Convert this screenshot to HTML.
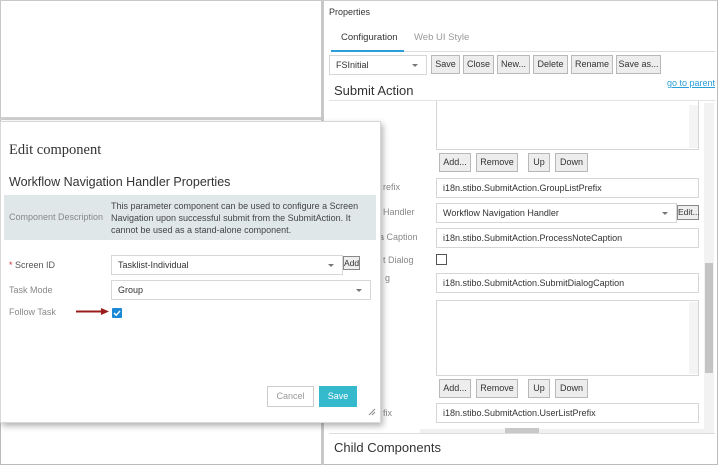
<!DOCTYPE html>
<html><head><style>
*{box-sizing:border-box;margin:0;padding:0}
body{width:718px;height:465px;overflow:hidden;background:#fff;font-family:"Liberation Sans",sans-serif;font-size:9px;color:#333;position:relative}
.a{position:absolute}
.btn{position:absolute;height:19px;border:1px solid #b8b8b8;background:#ededed;font-size:9px;text-align:center;line-height:17px;color:#333}
.inp{position:absolute;height:20px;border:1px solid #d6d6d6;background:#fff;padding-left:6px;line-height:18px;font-size:9px;color:#333}
.caret{position:absolute;right:8px;top:8px;width:0;height:0;border-left:3px solid transparent;border-right:3px solid transparent;border-top:3px solid #777}
.lbl{position:absolute;color:#888;font-size:9px}
</style></head><body>
<div class="a" style="left:0;top:0;width:718px;height:465px;border:1px solid #bbb;border-top:1px solid #ccc"></div>
<div class="a" style="left:0;top:0;width:323px;height:120px;border:1px solid #c8c8c8;border-right:2px solid #c4c4c4;border-bottom:3px solid #cfcfcf"></div>
<div class="a" style="left:321px;top:0;width:3px;height:465px;background:#c8c8c8"></div>
<div class="a" style="left:329px;top:7px;font-size:9px;color:#333">Properties</div>
<div class="a" style="left:341px;top:32px;font-size:9.5px;color:#333">Configuration</div>
<div class="a" style="left:414px;top:32px;font-size:9.5px;color:#999">Web UI Style</div>
<div class="a" style="left:331px;top:50px;width:73px;height:2px;background:#2a9fd8"></div>
<div class="a" style="left:404px;top:51px;width:311px;height:1px;background:#ddd"></div>
<div class="inp" style="left:329px;top:55px;width:98px">FSInitial<span class="caret"></span></div>
<div class="btn" style="left:431px;top:55px;width:29px">Save</div>
<div class="btn" style="left:463px;top:55px;width:31px">Close</div>
<div class="btn" style="left:497px;top:55px;width:33px">New...</div>
<div class="btn" style="left:533px;top:55px;width:35px">Delete</div>
<div class="btn" style="left:571px;top:55px;width:42px">Rename</div>
<div class="btn" style="left:616px;top:55px;width:45px">Save as...</div>
<div class="a" style="left:667px;top:78px;font-size:9px;color:#2a9fd8;text-decoration:underline">go to parent</div>
<div class="a" style="left:334px;top:83px;font-size:13px;color:#333">Submit Action</div>
<div class="a" style="left:329px;top:100px;width:386px;height:1px;background:#e2e2e2"></div>
<div class="a" style="left:704px;top:103px;width:10px;height:330px;background:#f2f2f2"></div>
<div class="a" style="left:705px;top:263px;width:8px;height:110px;background:#c4c4c4"></div>
<div class="a" style="left:420px;top:429px;width:285px;height:4px;background:#f0f0f0"></div>
<div class="a" style="left:505px;top:428px;width:34px;height:5px;background:#c8c8c8"></div>
<div class="a" style="left:329px;top:433px;width:386px;height:1px;background:#ddd"></div>
<div class="inp" style="left:436px;top:101px;width:263px;height:49px;border-top:none"></div>
<div class="a" style="left:689px;top:105px;width:9px;height:43px;background:#f4f4f4"></div>
<div class="btn" style="left:439px;top:153px;width:32px">Add...</div>
<div class="btn" style="left:476px;top:153px;width:42px">Remove</div>
<div class="btn" style="left:528px;top:153px;width:22px">Up</div>
<div class="btn" style="left:555px;top:153px;width:33px">Down</div>
<div class="lbl" style="left:383px;top:182px">refix</div>
<div class="inp" style="left:436px;top:178px;width:263px">i18n.stibo.SubmitAction.GroupListPrefix</div>
<div class="lbl" style="left:383px;top:207px">Handler</div>
<div class="inp" style="left:436px;top:203px;width:241px">Workflow Navigation Handler<span class="caret"></span></div>
<div class="a" style="left:677px;top:205px;width:22px;height:15px;border:1px solid #888;background:#eee;font-size:8.5px;line-height:13px;text-align:center">Edit...</div>
<div class="lbl" style="left:379px;top:232px">a Caption</div>
<div class="inp" style="left:436px;top:228px;width:263px">i18n.stibo.SubmitAction.ProcessNoteCaption</div>
<div class="lbl" style="left:383px;top:255px">t Dialog</div>
<div class="a" style="left:436px;top:254px;width:11px;height:11px;border:1px solid #555;background:#fff"></div>
<div class="lbl" style="left:385px;top:273px">g</div>
<div class="inp" style="left:436px;top:273px;width:263px">i18n.stibo.SubmitAction.SubmitDialogCaption</div>
<div class="inp" style="left:436px;top:300px;width:263px;height:76px"></div>
<div class="a" style="left:689px;top:302px;width:9px;height:72px;background:#f4f4f4"></div>
<div class="btn" style="left:439px;top:379px;width:32px">Add...</div>
<div class="btn" style="left:476px;top:379px;width:42px">Remove</div>
<div class="btn" style="left:528px;top:379px;width:22px">Up</div>
<div class="btn" style="left:555px;top:379px;width:33px">Down</div>
<div class="lbl" style="left:383px;top:408px">fix</div>
<div class="inp" style="left:436px;top:403px;width:263px">i18n.stibo.SubmitAction.UserListPrefix</div>
<div class="a" style="left:334px;top:440px;font-size:13px;color:#333">Child Components</div>
<div class="a" style="left:0;top:121px;width:381px;height:302px;background:#fff;border:1px solid #d8d8d8;box-shadow:2px 3px 6px rgba(0,0,0,.3)">
<div class="a" style="left:8px;top:20px;font-family:'Liberation Serif',serif;font-size:14.5px;color:#333">Edit component</div>
<div class="a" style="left:8px;top:53px;font-size:12.5px;color:#333">Workflow Navigation Handler Properties</div>
<div class="a" style="left:3px;top:73px;width:372px;height:45px;background:#dfe7e9"></div>
<div class="a" style="left:8px;top:90px;font-size:9px;color:#888">Component Description</div>
<div class="a" style="left:110px;top:78px;font-size:9px;color:#444;line-height:12px;width:260px">This parameter component can be used to configure a Screen Navigation upon successful submit from the SubmitAction. It cannot be used as a stand-alone component.</div>
<div class="a" style="left:8px;top:138px;font-size:9px;color:#555"><span style="color:#c33">*</span> Screen ID</div>
<div class="inp" style="left:110px;top:133px;width:232px">Tasklist-Individual<span class="caret"></span></div>
<div class="a" style="left:342px;top:134px;width:17px;height:14px;border:1px solid #888;background:#eee;font-size:8.5px;line-height:12px;text-align:center">Add</div>
<div class="lbl" style="left:8px;top:163px">Task Mode</div>
<div class="inp" style="left:110px;top:158px;width:260px">Group<span class="caret"></span></div>
<div class="lbl" style="left:8px;top:185px">Follow Task</div>
<svg class="a" style="left:74px;top:186px" width="36" height="7"><path d="M1 3.5 L28 3.5" stroke="#9b1c1c" stroke-width="2"/><path d="M26 0 L34 3.5 L26 7 Z" fill="#9b1c1c"/></svg>
<div class="a" style="left:111px;top:186px;width:10px;height:10px;background:#1a8ad6;border-radius:1px"></div>
<svg class="a" style="left:111px;top:186px" width="10" height="10"><path d="M2 5 L4.2 7.2 L8 3" stroke="#fff" stroke-width="1.4" fill="none"/></svg>
<div class="a" style="left:266px;top:264px;width:47px;height:21px;border:1px solid #ccc;background:#fff;color:#999;text-align:center;line-height:19px;font-size:9px">Cancel</div>
<div class="a" style="left:318px;top:264px;width:38px;height:21px;background:#35b9cc;color:#fff;text-align:center;line-height:21px;font-size:9px">Save</div>
<svg class="a" style="left:367px;top:286px" width="8" height="8"><path d="M7 1 L1 7 M7 4 L4 7" stroke="#888" stroke-width="1"/></svg>
</div>
</body></html>
